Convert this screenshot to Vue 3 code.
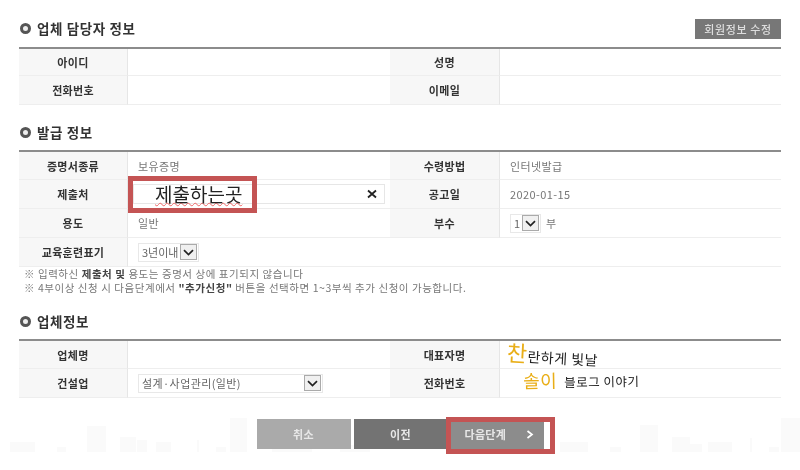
<script setup>
const account = [
  ['아이디', '성명'],
  ['전화번호', '이메일'],
]
const skyline = [
  [10, 442, 25, 10], [57, 447, 9, 5], [87, 426, 19, 26], [120, 437, 16, 15], [137, 440, 10, 12],
  [156, 442, 15, 10], [197, 440, 2, 12], [216, 447, 10, 5], [230, 418, 17, 34], [272, 442, 40, 10],
  [340, 445, 30, 7], [560, 442, 28, 10], [610, 447, 11, 5], [640, 425, 18, 27], [672, 437, 18, 15],
  [690, 444, 12, 8], [708, 442, 24, 10], [750, 438, 2, 14], [769, 447, 10, 5], [781, 418, 19, 34],
]
</script>

<template>
  <div class="page">
    <svg class="skyline" width="800" height="470" viewBox="0 0 800 470" aria-hidden="true">
      <rect v-for="(r, i) in skyline" :key="i" :x="r[0]" :y="r[1]" :width="r[2]" :height="r[3]" fill="#fafafa" />
    </svg>

    <div class="head first">
      <h2 class="title"><i class="dot"></i>업체 담당자 정보</h2>
      <button class="edit">회원정보 수정</button>
    </div>
    <div class="grid short">
      <template v-for="row in account" :key="row[0]">
        <div class="th">{{ row[0] }}</div><div class="td"></div>
        <div class="th">{{ row[1] }}</div><div class="td"></div>
      </template>
    </div>

    <div class="head">
      <h2 class="title"><i class="dot"></i>발급 정보</h2>
    </div>
    <div class="grid issue">
      <div class="th">증명서종류</div><div class="td">보유증명</div>
      <div class="th">수령방법</div><div class="td">인터넷발급</div>

      <div class="th">제출처</div>
      <div class="td field-cell">
        <div class="field">
          <span class="typed">제출하는곳</span>
          <svg width="10" height="10" viewBox="0 0 10 10"><path d="M1 1.5 9 8.5M9 1.5 1 8.5" stroke="#222" stroke-width="1.8" fill="none" /></svg>
        </div>
        <span class="mark mark-field"></span>
      </div>
      <div class="th">공고일</div><div class="td">2020-01-15</div>

      <div class="th">용도</div><div class="td">일반</div>
      <div class="th">부수</div>
      <div class="td inline">
        <div class="select s-count"><span>1</span><b class="arrow"><svg width="11" height="7" viewBox="0 0 11 7"><path d="M1 1.2 5.5 5.5 10 1.2" stroke="#222" stroke-width="1.7" fill="none" /></svg></b></div>
        <span>부</span>
      </div>

      <div class="th">교육훈련표기</div>
      <div class="td wide">
        <div class="select s-year"><span>3년이내</span><b class="arrow"><svg width="11" height="7" viewBox="0 0 11 7"><path d="M1 1.2 5.5 5.5 10 1.2" stroke="#222" stroke-width="1.7" fill="none" /></svg></b></div>
      </div>
    </div>
    <div class="notes">
      <p>※ 입력하신 <b>제출처 및</b> 용도는 증명서 상에 표기되지 않습니다</p>
      <p>※ 4부이상 신청 시 다음단계에서 <b>"추가신청"</b> 버튼을 선택하면 1~3부씩 추가 신청이 가능합니다.</p>
    </div>

    <div class="head third">
      <h2 class="title"><i class="dot"></i>업체정보</h2>
    </div>
    <div class="grid company">
      <div class="th">업체명</div><div class="td"></div>
      <div class="th">대표자명</div>
      <div class="td sign-cell">
        <span class="sign sign-a"><em>찬</em>란하게 빛날</span>
      </div>

      <div class="th">건설업</div>
      <div class="td">
        <div class="select s-type"><span>설계·사업관리(일반)</span><b class="arrow"><svg width="11" height="7" viewBox="0 0 11 7"><path d="M1 1.2 5.5 5.5 10 1.2" stroke="#222" stroke-width="1.7" fill="none" /></svg></b></div>
      </div>
      <div class="th">전화번호</div>
      <div class="td sign-cell">
        <span class="sign sign-b"><em>솔이</em>블로그 이야기</span>
      </div>
    </div>

    <div class="actions">
      <button class="btn cancel">취소</button>
      <button class="btn prev">이전</button>
      <div class="next-wrap">
        <button class="btn next"><span>다음단계</span>
          <svg width="8" height="9" viewBox="0 0 8 9"><path d="M1.5 1 6 4.5 1.5 8" stroke="#fff" stroke-width="1.7" fill="none" /></svg>
        </button>
        <span class="mark mark-next"></span>
      </div>
    </div>
  </div>
</template>

<style scoped>
.page {
  position: relative;
  width: 800px;
  height: 470px;
  box-sizing: border-box;
  padding: 19px 19px 0;
  overflow: hidden;
  background: #fff;
  font-family: "Noto Sans CJK KR", "Noto Sans", sans-serif;
  font-size: 11px;
  color: #777;
  filter: blur(0.5px);
}
.skyline { position: absolute; left: 0; top: 0; }
.head {
  position: relative;
  display: flex;
  align-items: center;
  justify-content: space-between;
  height: 20px;
  margin: 18px 0 7px;
}
.head.first { margin: 0 0 8px; }
.head.third { margin: 17px 0 7px; }
.title {
  display: flex;
  align-items: center;
  margin: 0 0 2px;
  font-size: 13.5px;
  font-weight: 700;
  letter-spacing: 0.6px;
  color: #333;
}
.dot {
  width: 5px;
  height: 5px;
  margin: 0 6px 0 1px;
  border: 3px solid #555;
  border-radius: 50%;
  background: #eee;
}
.edit {
  width: 86px;
  height: 20px;
  padding: 0;
  border: 0;
  background: #777;
  color: #ddd;
  font: 500 11px "Noto Sans CJK KR", sans-serif;
  letter-spacing: 0.6px;
}
.grid {
  position: relative;
  display: grid;
  grid-template-columns: 109px 262px 110px 281px;
  grid-auto-rows: 29px;
  border-top: 2px solid #8c8c8c;
}
.grid.short { grid-template-rows: 27px 29px; }
.grid.issue { grid-template-rows: 28px 29px 29px 29px; }
.grid.company { grid-template-rows: 28px 29px; }
.th, .td {
  display: flex;
  align-items: center;
  box-sizing: border-box;
  border-bottom: 1px solid #eee;
}
.th {
  justify-content: center;
  background: #f7f7f7;
  border-right: 1px solid #e6e6e6;
  color: #333;
  font-weight: 700;
  letter-spacing: 0.3px;
}
.td {
  padding-left: 10px;
  color: #777;
  letter-spacing: 0.4px;
}
.wide { grid-column: span 3; }
.field-cell, .sign-cell { position: relative; }
.field {
  display: flex;
  align-items: center;
  justify-content: space-between;
  flex: none;
  box-sizing: border-box;
  width: 252px;
  height: 20px;
  margin-left: -5px;
  padding: 0 7px 0 21px;
  border: 1px solid #e6e6e6;
}
.typed {
  font-size: 19px;
  line-height: 20px;
  color: #222;
  letter-spacing: 0;
  text-decoration: underline wavy #e66;
  text-decoration-thickness: 1px;
  text-underline-offset: 0;
}
.mark { position: absolute; box-sizing: border-box; border: 5px solid #c45454; pointer-events: none; }
.mark-field { left: 0; top: -4px; width: 129px; height: 37px; }
.select {
  display: flex;
  align-items: center;
  justify-content: space-between;
  flex: none;
  box-sizing: border-box;
  height: 19px;
  padding: 0 1px 0 3px;
  border: 1px solid #e8e8e8;
  color: #666;
  white-space: nowrap;
}
.arrow {
  display: flex;
  align-items: center;
  justify-content: center;
  flex: none;
  box-sizing: border-box;
  width: 17px;
  height: 16px;
  border: 1px solid #aaa;
  background: #f0f0f0;
}
.s-count { width: 31px; }
.s-year { width: 61px; letter-spacing: 0; }
.s-type { width: 185px; }
.inline { gap: 5px; }
.notes { height: 28px; }
.notes p { margin: 0 0 0 5px; height: 14px; line-height: 14px; font-size: 10.5px; color: #777; letter-spacing: 0.55px; }
.notes b { color: #444; }
.sign {
  position: absolute;
  white-space: nowrap;
  color: #222;
  font-weight: 400;
  font-size: 14px;
  letter-spacing: 0.5px;
  transform: rotate(3deg);
  transform-origin: left center;
}
.sign em { font-style: normal; color: #e9ae17; font-size: 22px; }
.sign-a { left: 7px; top: -6px; }
.sign-b { left: 23px; top: -2px; font-size: 12.5px; transform: rotate(-1deg); }
.sign-b em { margin-right: 7px; font-size: 18px; }
.actions {
  position: relative;
  display: flex;
  justify-content: center;
  gap: 3px;
  margin-top: 21px;
  width: 762px;
  box-sizing: border-box;
}
.btn {
  display: flex;
  align-items: center;
  justify-content: center;
  width: 94px;
  height: 30px;
  padding: 0;
  border: 0;
  color: #e8e8e8;
  font: 700 11px "Noto Sans CJK KR", sans-serif;
  letter-spacing: 0.3px;
}
.cancel { background: #aaa; }
.prev { background: #737373; }
.next-wrap { position: relative; }
.next {
  justify-content: space-between;
  width: 93px;
  padding: 0 10px 0 14px;
  background: #8c8c8c;
}
.mark-next { left: -5px; top: -2px; width: 109px; height: 37px; }
</style>
